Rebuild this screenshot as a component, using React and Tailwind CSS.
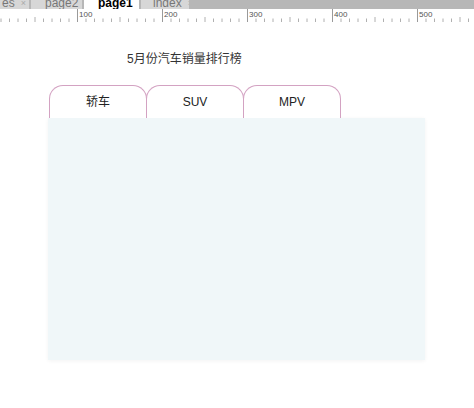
import { useState } from "react";

const font = { fontFamily: '"Liberation Sans", "Noto Sans CJK SC", sans-serif' };

const browserTabs = [
  { label: "es", w: "w-[29px]", active: false, pl: "pl-[2px]" },
  { label: "page2", w: "w-[51px]", active: false, pl: "pl-[14px]" },
  { label: "page1", w: "w-[55px]", active: true, pl: "pl-[14px]" },
  { label: "index", w: "w-[48px]", active: false, pl: "pl-[12px]" },
];

const Ruler = () => {
  const ticks = [];
  for (let i = 0; i <= 60; i++) {
    const x = -8 + i * 8.5;
    const major = i % 10 === 0;
    const mid = i % 5 === 0;
    ticks.push(
      <line
        key={i}
        x1={x + 0.5}
        x2={x + 0.5}
        y1={major ? 0 : mid ? 8 : 9.5}
        y2={13}
        stroke={major ? "#9a9a9a" : "#b0b0b0"}
        strokeWidth="1"
      />
    );
  }
  return (
    <svg width="474" height="13" className="block">
      {ticks}
      {[100, 200, 300, 400, 500].map((n, i) => (
        <text
          key={n}
          x={-8 + (i + 1) * 85 + 2}
          y="7.5"
          fontSize="8"
          fill="#555"
          fontFamily="Liberation Sans, sans-serif"
        >
          {n}
        </text>
      ))}
    </svg>
  );
};

const tabs = ["轿车", "SUV", "MPV"];

export default function App() {
  const [active, setActive] = useState(0);

  return (
    <div className="w-[474px] h-[408px] bg-white overflow-hidden" style={font}>
      {/* editor tab strip, cut off at the top */}
      <div className="flex h-[9px] bg-[#b7b7b7] overflow-hidden">
        {browserTabs.map((t, i) => (
          <div
            key={t.label}
            className={`${t.w} ${t.pl} ${i > 0 ? "ml-[2px]" : ""} flex items-end gap-[6px] overflow-hidden ${
              t.active ? "bg-white text-black font-bold" : "bg-[#d7d7d7] text-[#777]"
            }`}
          >
            <span className="text-[12px] leading-none">{t.label}</span>
            <span className="text-[9px] leading-none text-[#aaa] pb-[1px]">×</span>
          </div>
        ))}
      </div>

      <Ruler />

      <div className="mt-[27px] pl-[127px] text-[12px] leading-[20px] text-[#333]">
        5月份汽车销量排行榜
      </div>

      <div className="mt-[16px] pl-[49px] flex">
        {tabs.map((t, i) => (
          <button
            key={t}
            onClick={() => setActive(i)}
            className={`w-[98px] h-[33px] ${i > 0 ? "-ml-px" : ""} border border-b-0 border-[#d3a2c2] rounded-t-[14px] bg-white text-[12px] text-[#222] flex items-center justify-center`}
          >
            {t}
          </button>
        ))}
      </div>

      <div className="ml-[48px] w-[377px] h-[242px] bg-[#f0f7f9] shadow-[0_1px_4px_rgba(0,0,0,0.05)]">
        <div className="hidden">{tabs[active]}</div>
      </div>
    </div>
  );
}
